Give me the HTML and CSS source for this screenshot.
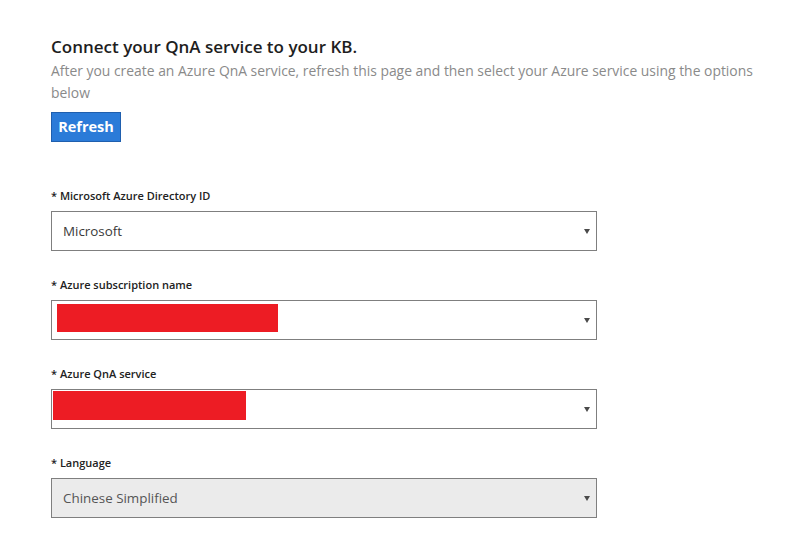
FILE: index.html
```html
<!DOCTYPE html>
<html lang="en">
<head>
<meta charset="utf-8">
<title>Connect your QnA service</title>
<link rel="stylesheet" href="styles.css">
</head>
<body>
<main class="page">
  <h1 class="title">Connect your QnA service to your KB.</h1>
  <p class="subtitle">After you create an Azure QnA service, refresh this page and then select your Azure service using the options below</p>
  <button class="btn" type="button">Refresh</button>

  <form class="form">
    <div class="field">
      <label class="label">* Microsoft Azure Directory ID</label>
      <div class="select">
        <span class="value">Microsoft</span>
        <svg class="arrow" width="6" height="5" viewBox="0 0 6 5"><polygon points="0,0 6,0 3,5" fill="#4a4a4a"/></svg>
      </div>
    </div>
    <div class="field">
      <label class="label">* Azure subscription name</label>
      <div class="select">
        <span class="redact redact-a"></span>
        <svg class="arrow" width="6" height="5" viewBox="0 0 6 5"><polygon points="0,0 6,0 3,5" fill="#4a4a4a"/></svg>
      </div>
    </div>
    <div class="field">
      <label class="label">* Azure QnA service</label>
      <div class="select">
        <span class="redact redact-b"></span>
        <svg class="arrow" width="6" height="5" viewBox="0 0 6 5"><polygon points="0,0 6,0 3,5" fill="#4a4a4a"/></svg>
      </div>
    </div>
    <div class="field">
      <label class="label">* Language</label>
      <div class="select disabled">
        <span class="value muted">Chinese Simplified</span>
        <svg class="arrow" width="6" height="5" viewBox="0 0 6 5"><polygon points="0,0 6,0 3,5" fill="#4a4a4a"/></svg>
      </div>
    </div>
  </form>
</main>
</body>
</html>
```

FILE: styles.css
```css
html, body {
  margin: 0;
  padding: 0;
  background: #ffffff;
}

body {
  font-family: "Open Sans", "Noto Sans", "Liberation Sans", sans-serif;
  color: #222222;
}

.page {
  padding: 35px 0 0 51px;
  display: flex;
  flex-direction: column;
  align-items: flex-start;
}

.title {
  margin: 0;
  font-size: 17px;
  line-height: 24px;
  font-weight: 600;
  color: #1e1e1e;
}

.subtitle {
  margin: 1px 0 0;
  width: 712px;
  font-size: 13.9px;
  line-height: 22px;
  color: #8a8a8a;
}

.btn {
  margin-top: 8px;
  width: 70px;
  height: 30px;
  padding: 0;
  background: #2b7bd8;
  border: 1px solid #1f5fae;
  color: #ffffff;
  font-family: inherit;
  font-size: 14.5px;
  font-weight: 700;
  line-height: 28px;
}

.form {
  margin-top: 46px;
  display: flex;
  flex-direction: column;
  gap: 26px;
}

.field {
  display: flex;
  flex-direction: column;
  gap: 7px;
}

.label {
  font-size: 11px;
  line-height: 16px;
  font-weight: 600;
  color: #222222;
}

.select {
  position: relative;
  box-sizing: border-box;
  width: 546px;
  height: 40px;
  border: 1px solid #7f7f7f;
  background: #ffffff;
  display: flex;
  align-items: center;
  padding: 0 6px 0 11px;
}

.select.disabled {
  background: #ebebeb;
}

.value {
  flex: 1;
  font-size: 13.4px;
  color: #3a3a3a;
}

.value.muted {
  color: #555555;
}

.arrow {
  margin-left: auto;
  display: block;
}

.redact {
  position: absolute;
  background: #ed1c24;
}

.redact-a {
  left: 5px;
  top: 3px;
  width: 221px;
  height: 28px;
}

.redact-b {
  left: 1px;
  top: 1px;
  width: 193px;
  height: 29px;
}
```
